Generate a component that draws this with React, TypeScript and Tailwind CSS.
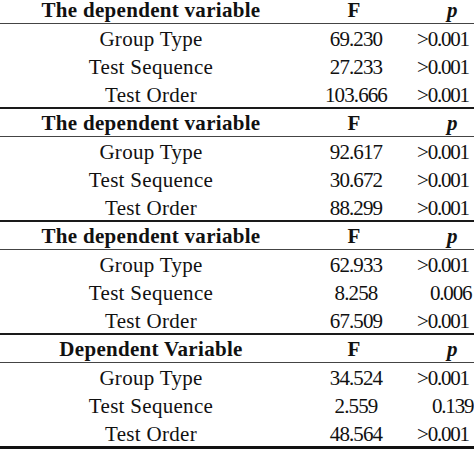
const sections = [
  {
    title: "The dependent variable",
    rows: [
      { name: "Group Type", f: "69.230", p: ">0.001", pad: "pl-[7px]" },
      { name: "Test Sequence", f: "27.233", p: ">0.001", pad: "pl-[7px]" },
      { name: "Test Order", f: "103.666", p: ">0.001", pad: "pl-[7px]" },
    ],
  },
  {
    title: "The dependent variable",
    rows: [
      { name: "Group Type", f: "92.617", p: ">0.001", pad: "pl-[7px]" },
      { name: "Test Sequence", f: "30.672", p: ">0.001", pad: "pl-[7px]" },
      { name: "Test Order", f: "88.299", p: ">0.001", pad: "pl-[7px]" },
    ],
  },
  {
    title: "The dependent variable",
    rows: [
      { name: "Group Type", f: "62.933", p: ">0.001", pad: "pl-[7px]" },
      { name: "Test Sequence", f: "8.258", p: "0.006", pad: "pl-[20px]" },
      { name: "Test Order", f: "67.509", p: ">0.001", pad: "pl-[7px]" },
    ],
  },
  {
    title: "Dependent Variable",
    rows: [
      { name: "Group Type", f: "34.524", p: ">0.001", pad: "pl-[7px]" },
      { name: "Test Sequence", f: "2.559", p: "0.139", pad: "pl-[22px]" },
      { name: "Test Order", f: "48.564", p: ">0.001", pad: "pl-[7px]" },
    ],
  },
]

export default function App() {
  return (
    <div className="w-[474px] h-[474px] overflow-hidden bg-white text-[#111] font-['Liberation_Serif',serif] text-[21px]">
      <div className="mt-[-4px]">
        {sections.map((s, i) => (
          <div
            key={i}
            className={
              i === sections.length - 1
                ? "h-[114px] border-b-[3px] border-[#111]"
                : "h-[113px] border-b-2 border-[#1a1a1a]"
            }
          >
            {/* header row */}
            <div className="grid grid-cols-[302px_108px_1fr] h-[28px] pt-[4px] border-b border-[#444] leading-[20px] font-bold">
              <div className="text-center tracking-[0.3px]">{s.title}</div>
              <div className="text-center pr-[4px]">F</div>
              <div className="pl-[37px] italic">p</div>
            </div>
            {s.rows.map((r, j) => (
              <div
                key={j}
                className={`grid grid-cols-[302px_108px_1fr] leading-[28px] ${j === 2 ? "h-[27px]" : "h-[28px]"}`}
              >
                <div className="text-center tracking-[0.3px] pt-[1px]">{r.name}</div>
                <div className="text-center tracking-[-0.9px] pt-[1px]">{r.f}</div>
                <div className={`whitespace-nowrap tracking-[-1.2px] pt-[1px] ${r.pad}`}>{r.p}</div>
              </div>
            ))}
          </div>
        ))}
      </div>
    </div>
  )
}
